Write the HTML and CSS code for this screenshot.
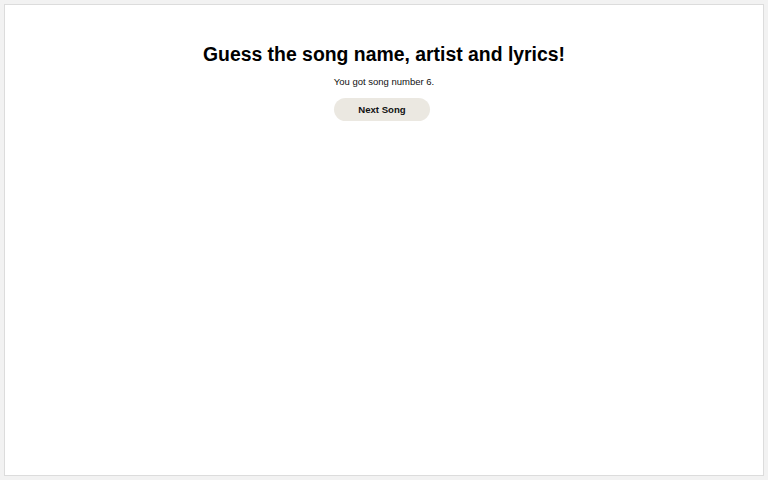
FILE: index.html
```html
<!DOCTYPE html>
<html lang="en">
<head>
    <meta charset="UTF-8">
    <meta name="viewport" content="width=device-width, initial-scale=1.0">
    <title>Guess the song</title>
    <link rel="stylesheet" href="styles.css">
</head>
<body>
    <div class="container">
        <h1 class="title">Guess the song name, artist and lyrics!</h1>
        <p class="status">You got song number 6.</p>
        <button class="next-button">Next Song</button>
    </div>
</body>
</html>
```

FILE: styles.css
```css
* {
    box-sizing: border-box;
}

body {
    margin: 0;
    padding: 4px;
    font-family: "Liberation Sans", Arial, sans-serif;
    background-color: #f2f2f2;
    height: 480px;
}

.container {
    height: 472px;
    background-color: #fff;
    border: 1px solid #dcdcdc;
    display: flex;
    flex-direction: column;
    align-items: center;
    padding-top: 37px;
}

.title {
    margin: 0;
    font-size: 19.4px;
    font-weight: bold;
    color: #000;
    line-height: 24px;
}

.status {
    margin: 10px 0 0 0;
    font-size: 9.5px;
    line-height: 12px;
    color: #111;
}

.next-button {
    margin: 10px 4px 0 0;
    width: 96px;
    height: 23px;
    border: none;
    border-radius: 12px;
    background-color: #ebe8e1;
    font-family: inherit;
    font-size: 9.6px;
    font-weight: bold;
    color: #111;
    cursor: pointer;
}
```
